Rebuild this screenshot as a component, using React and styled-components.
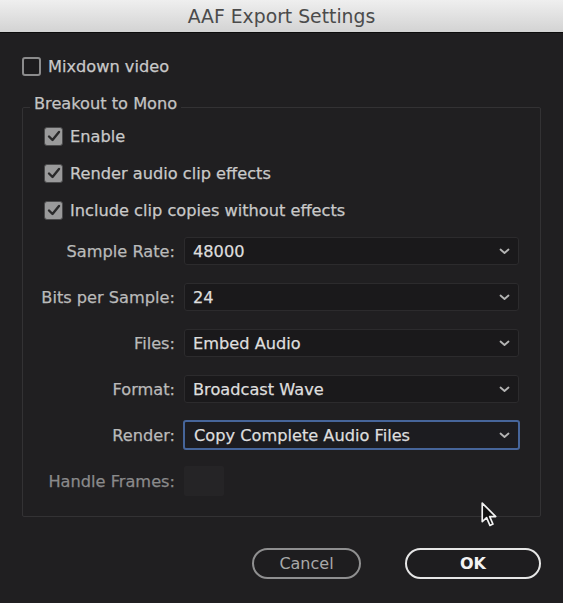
import React from "react";
import styled, { createGlobalStyle } from "styled-components";

const GlobalStyle = createGlobalStyle`
  html, body {
    margin: 0;
    padding: 0;
    background: #201f21;
  }
  body {
    font-family: "DejaVu Sans", "Liberation Sans", sans-serif;
    -webkit-font-smoothing: antialiased;
  }
`;

const checks = ["Enable", "Render audio clip effects", "Include clip copies without effects"];

const fields = [
  { label: "Sample Rate:", value: "48000" },
  { label: "Bits per Sample:", value: "24" },
  { label: "Files:", value: "Embed Audio" },
  { label: "Format:", value: "Broadcast Wave" },
  { label: "Render:", value: "Copy Complete Audio Files", focused: true },
];

const CheckMark = () => (
  <svg width="14" height="12" viewBox="0 0 14 12">
    <path d="M2 6.5 L5.5 10 L12 2" fill="none" stroke="#2a2a2b" strokeWidth="2.4" strokeLinecap="round" strokeLinejoin="round" />
  </svg>
);

const Chevron = () => (
  <svg width="11" height="7" viewBox="0 0 11 7">
    <path d="M1.5 1.5 L5.5 5 L9.5 1.5" fill="none" stroke="#b4b4b4" strokeWidth="1.8" strokeLinecap="round" strokeLinejoin="round" />
  </svg>
);

const Cursor = () => (
  <svg width="17" height="26" viewBox="0 0 16 25">
    <path
      d="M1 1 L1 19 L5.2 15 L8.4 22.5 L11.3 21.2 L8.2 14 L14 14 Z"
      fill="#111"
      stroke="#f2f2f2"
      strokeWidth="1.6"
      strokeLinejoin="round"
    />
  </svg>
);

const Check = ({ label, checked }) => (
  <CheckRow>
    <Box $checked={checked}>{checked && <CheckMark />}</Box>
    <CheckLabel>{label}</CheckLabel>
  </CheckRow>
);

const App = () => {
  return (
    <>
      <GlobalStyle />
      <Window>
        <TitleBar>AAF Export Settings</TitleBar>
        <Body>
          <Check label="Mixdown video" />
          <Group>
            <Legend>Breakout to Mono</Legend>
            <CheckList>
              {checks.map((c) => (
                <Check key={c} label={c} checked />
              ))}
            </CheckList>
            <Fields>
              {fields.map((f) => (
                <FieldRow key={f.label}>
                  <FieldLabel>{f.label}</FieldLabel>
                  <Select $focused={f.focused}>
                    <span>{f.value}</span>
                    <Chevron />
                  </Select>
                </FieldRow>
              ))}
              <FieldRow>
                <FieldLabel $disabled>Handle Frames:</FieldLabel>
                <FrameInput />
              </FieldRow>
            </Fields>
          </Group>
          <Buttons>
            <Button>Cancel</Button>
            <Button $primary>OK</Button>
          </Buttons>
        </Body>
        <CursorSpot>
          <Cursor />
        </CursorSpot>
      </Window>
    </>
  );
};

export default App;

const Window = styled.div`
  position: relative;
  width: 563px;
  height: 603px;
  background: #201f21;
  display: flex;
  flex-direction: column;
  overflow: hidden;
`;

const TitleBar = styled.div`
  height: 32px;
  border-bottom: 1px solid #0c0c0c;
  background: linear-gradient(to bottom, #efefef, #d3d3d3);
  display: flex;
  align-items: center;
  justify-content: center;
  font-size: 18.8px;
  color: #4b4b4b;
`;

const Body = styled.div`
  padding: 23px 22px 0 22px;
  display: flex;
  flex-direction: column;
`;

const CheckRow = styled.label`
  display: flex;
  align-items: center;
  gap: 7px;
  height: 20px;
`;

const Box = styled.span`
  box-sizing: border-box;
  width: 19px;
  height: 19px;
  border-radius: 3px;
  display: flex;
  align-items: center;
  justify-content: center;
  border: ${(p) => (p.$checked ? "1px solid #4a4a4b" : "2px solid #8b8b8c")};
  background: ${(p) => (p.$checked ? "#9a9a9b" : "#1d1c1e")};
`;

const Text = styled.span`
  font-size: 16.2px;
  -webkit-text-stroke: 0.25px currentColor;
`;

const CheckLabel = styled(Text)`
  color: #c9c9c9;
`;

const Group = styled.fieldset`
  margin: 18px 0 0 0;
  padding: 6px 21px 20px 0;
  border: 1px solid #333234;
  border-radius: 2px;
  min-width: 0;
`;

const Legend = styled.legend`
  margin-left: 7px;
  padding: 0 4px 6px 4px;
  line-height: 20px;
  font-size: 16.2px;
  -webkit-text-stroke: 0.25px currentColor;
  color: #c4c4c4;
`;

const CheckList = styled.div`
  display: flex;
  flex-direction: column;
  gap: 17px;
  padding-left: 21px;
`;

const Fields = styled.div`
  margin-top: 16px;
  display: flex;
  flex-direction: column;
  gap: 16px;
`;

const FieldRow = styled.div`
  display: flex;
  align-items: center;
  gap: 9px;
  height: 30px;
`;

const FieldLabel = styled(Text)`
  width: 152px;
  text-align: right;
  color: ${(p) => (p.$disabled ? "#8a8a8b" : "#bababa")};
`;

const Select = styled.div`
  box-sizing: border-box;
  flex: 1;
  height: ${(p) => (p.$focused ? "30px" : "28px")};
  margin: ${(p) => (p.$focused ? "0 -1px" : "0")};
  display: flex;
  align-items: center;
  justify-content: space-between;
  padding: 0 8px 0 ${(p) => (p.$focused ? "9px" : "8px")};
  background: ${(p) => (p.$focused ? "#1c1c20" : "#1a191b")};
  border: ${(p) => (p.$focused ? "2px solid #46659a" : "1px solid #2c2b2d")};
  border-radius: 3px;
  font-size: 16.2px;
  -webkit-text-stroke: 0.25px currentColor;
  color: #dedede;
`;

const FrameInput = styled.div`
  width: 40px;
  height: 30px;
  background: #252426;
  border-radius: 2px;
`;

const Buttons = styled.div`
  margin-top: 31px;
  display: flex;
  justify-content: flex-end;
  gap: 44px;
`;

const Button = styled.button`
  box-sizing: border-box;
  height: 31px;
  width: ${(p) => (p.$primary ? "136px" : "109px")};
  border-radius: 16px;
  border: 2px solid ${(p) => (p.$primary ? "#e6e6e6" : "#8f8f90")};
  background: #1e1d1f;
  font-family: "DejaVu Sans", "Liberation Sans", sans-serif;
  font-size: 16px;
  font-weight: ${(p) => (p.$primary ? "bold" : "normal")};
  color: ${(p) => (p.$primary ? "#f2f2f2" : "#a9a9a9")};
  padding: 0;
`;

const CursorSpot = styled.div`
  position: absolute;
  left: 481px;
  top: 502px;
`;
